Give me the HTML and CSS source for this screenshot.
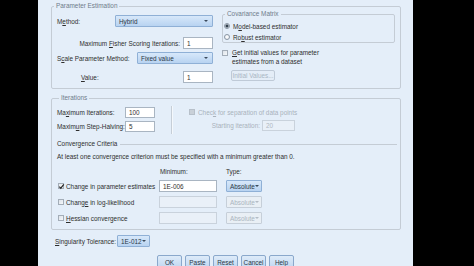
FILE: index.html
```html
<!DOCTYPE html>
<html>
<head>
<meta charset="utf-8">
<link rel="stylesheet" href="styles.css">
</head>
<body>
<div class="screen">
  <div class="side-l"></div>
  <div class="dialog">
    <fieldset class="group g-param">
      <legend>Parameter Estimation</legend>
      <div class="param-cols">
        <div class="param-left">
          <div class="row r-method">
            <span class="lbl w-method">M<u>e</u>thod:</span>
            <div class="combo c-method"><span>Hybrid</span><i class="arrow"></i></div>
          </div>
          <div class="row r-fisher end">
            <span class="lbl">Maximum <u>F</u>isher Scoring Iterations:</span>
            <div class="input i-small">1</div>
          </div>
          <div class="row r-scale between">
            <span class="lbl">S<u>c</u>ale Parameter Method:</span>
            <div class="combo c-scale"><span>Fixed value</span><i class="arrow"></i></div>
          </div>
          <div class="row r-value between">
            <span class="lbl ind-value"><u>V</u>alue:</span>
            <div class="input i-small">1</div>
          </div>
        </div>
        <div class="param-right">
          <fieldset class="group g-cov">
            <legend>Covariance Matrix</legend>
            <div class="radio-row rr-1"><span class="radio on"></span><span>M<u>o</u>del-based estimator</span></div>
            <div class="radio-row rr-2"><span class="radio"></span><span>Ro<u>b</u>ust estimator</span></div>
          </fieldset>
          <div class="init-row">
            <span class="check"></span>
            <span class="init-text"><u>G</u>et initial values for parameter<br>estimates from a dataset</span>
          </div>
          <div class="btn disabled b-init">Initial Values...</div>
        </div>
      </div>
    </fieldset>

    <fieldset class="group g-iter">
      <legend>Iterations</legend>
      <div class="iter-top">
        <div class="iter-left">
          <div class="row r-maxit">
            <span class="lbl w-maxit">Ma<u>x</u>imum Iterations:</span>
            <div class="input i-small i-h11">100</div>
          </div>
          <div class="row r-step">
            <span class="lbl w-maxit">Maxim<u>u</u>m Step-Halving:</span>
            <div class="input i-small i-h11">5</div>
          </div>
        </div>
        <div class="vsep"></div>
        <div class="iter-right">
          <div class="sep-row"><span class="check disabled-check"></span><span class="dis-text">Chec<u>k</u> for separation of data points</span></div>
          <div class="row r-start end">
            <span class="dis-text">Starting iteration:</span>
            <div class="input disabled-input i-start">20</div>
          </div>
        </div>
      </div>
      <div class="conv-head"><span>Convergence Criteria</span><span class="hline"></span></div>
      <div class="conv-note">At least one convergence criterion must be specified with a minimum greater than 0.</div>
      <div class="crit-grid">
        <span></span><span class="col-min">Minimum:</span><span class="col-type">Type:</span>

        <div class="crit-lbl"><span class="check checked"><svg viewBox="0 0 7 7" width="7" height="7"><path d="M1.3 3.6 L2.8 5.2 L5.8 1.3" fill="none" stroke="#2a2a2a" stroke-width="1.2"/></svg></span><span>Chan<u>g</u>e in parameter estimates</span></div>
        <div class="input i-crit">1E-006</div>
        <div class="combo c-type"><span>Absolute</span><i class="arrow"></i></div>

        <div class="crit-lbl"><span class="check"></span><span>Chang<u>e</u> in log-likelihood</span></div>
        <div class="input disabled-input i-crit"></div>
        <div class="combo disabled-combo c-type"><span>Absolute</span><i class="arrow"></i></div>

        <div class="crit-lbl"><span class="check"></span><span><u>H</u>essian convergence</span></div>
        <div class="input disabled-input i-crit"></div>
        <div class="combo disabled-combo c-type"><span>Absolute</span><i class="arrow"></i></div>
      </div>
    </fieldset>

    <div class="row r-sing">
      <span class="lbl w-sing"><u>S</u>ingularity Tolerance:</span>
      <div class="combo c-sing"><span>1E-012</span><i class="arrow"></i></div>
    </div>

    <div class="buttons">
      <div class="btn">OK</div>
      <div class="btn"><u>P</u>aste</div>
      <div class="btn"><u>R</u>eset</div>
      <div class="btn">Cancel</div>
      <div class="btn">Help</div>
    </div>
  </div>
  <div class="side-r"></div>
</div>
</body>
</html>
```

FILE: styles.css
```css
* { box-sizing: border-box; }
html, body { margin: 0; padding: 0; }
body {
  background: #000;
  width: 474px;
  height: 266px;
  overflow: hidden;
  font-family: "Liberation Sans", Arial, sans-serif;
  font-size: 6.4px;
  color: #2e2e2e;
}
u { text-decoration: underline; text-underline-offset: 1px; }

.screen { display: flex; height: 266px; }
.side-l { width: 38px; flex: none; background: #000; }
.side-r { flex: 1; background: #000; }

.dialog {
  width: 375px;
  flex: none;
  height: 266px;
  background: #e4eef9;
  padding: 2px 12px 0 13px;
  display: flex;
  flex-direction: column;
  overflow: hidden;
}
.dialog > * { flex: none; }

fieldset.group {
  margin: 0;
  padding: 0;
  border: 1px solid #c4ccd5;
  border-radius: 2px;
  min-width: 0;
}
legend {
  padding: 0 2px;
  margin-left: 2px;
  line-height: 8px;
  height: 8px;
  color: #6f7c8a;
}

.row { display: flex; align-items: center; height: 12px; }
.row.end { justify-content: flex-end; }
.row.between { justify-content: space-between; }
.lbl { white-space: nowrap; }

/* Parameter Estimation */
fieldset.g-param { height: 87px; }
.param-cols { display: flex; padding-left: 5px; }
.param-left { width: 156px; flex: none; }
.r-method { margin-top: 5px; }
.w-method { width: 58px; }
.c-method { width: 98px; }
.r-fisher { margin-top: 10px; }
.r-fisher .input { margin-left: 3px; }
.r-scale { margin-top: 3px; }
.c-scale { width: 76px; }
.r-value { margin-top: 7px; }
.ind-value { padding-left: 24px; }

.param-right { width: 173px; margin-left: 9px; flex: none; }
fieldset.g-cov { height: 33px; }
.radio-row { display: flex; align-items: center; height: 8px; padding-left: 1px; }
.rr-1 { margin-top: 4px; }
.rr-2 { margin-top: 3px; }
.radio {
  width: 6px; height: 6px; border-radius: 50%;
  border: 1px solid #8a96a3;
  background: radial-gradient(circle, #ffffff 0, #e6ebf0 100%);
  margin-right: 3px;
  flex: none;
}
.radio.on { background: radial-gradient(circle, #33404d 0, #33404d 1.3px, #dde4ec 1.8px); }

.init-row { display: flex; align-items: flex-start; margin-top: 5px; }
.init-row .check { margin-top: 2px; margin-right: 4px; }
.init-text { line-height: 9px; }
.b-init { width: 44px; height: 11px; margin-left: 9px; margin-top: 4px; }

/* widgets */
.combo {
  display: flex; align-items: center;
  height: 12px;
  border: 1px solid #8fb0d6;
  border-radius: 1px;
  background: linear-gradient(#d7e8fa, #b8d3f1);
  padding-left: 3px;
  color: #2a3744;
}
.arrow {
  margin-left: auto;
  margin-right: 4px;
  width: 0; height: 0;
  border-left: 2px solid transparent;
  border-right: 2px solid transparent;
  border-top: 2px solid #3a4a5c;
}
.disabled-combo {
  background: #e9eff5;
  border-color: #c6cfd9;
  color: #aab4be;
}
.disabled-combo .arrow { border-top-color: #b4bcc6; }

.input {
  display: flex; align-items: center;
  height: 12px;
  border: 1px solid #a9b5c2;
  background: #fff;
  padding-left: 3px;
  color: #2e2e2e;
}
.i-small { width: 30px; }
.i-h11 { height: 11px; }
.disabled-input { background: #e9f0f8; border-color: #c9d2dc; color: #b0b8c2; }

.check {
  width: 6px; height: 6px;
  border: 1px solid #a3adb8;
  background: linear-gradient(135deg, #dde3ea, #f6f8fa);
  flex: none;
  display: flex; align-items: center; justify-content: center;
}
.check svg { flex: none; margin: -1px; }
.disabled-check { background: #c9d0d8; border-color: #b7c0ca; }

.btn {
  display: flex; align-items: center; justify-content: center;
  border: 1px solid #8aa8cc;
  border-radius: 2px;
  background: linear-gradient(#deebf9, #c0d7f1);
  color: #2a3744;
}
.btn.disabled { background: #e4edf7; border-color: #bfcad7; color: #a9b6c3; }

/* Iterations */
fieldset.g-iter { height: 136px; margin-top: 5px; padding: 0 3px 0 5px; }
.iter-top { display: flex; }
.iter-left { width: 98px; flex: none; }
.r-maxit { margin-top: 5px; height: 11px; }
.r-step { margin-top: 3px; height: 11px; }
.w-maxit { width: 68px; }
.vsep { width: 1px; height: 28px; margin: 4px 0 0 16px; background: #c6ced7; box-shadow: 1px 0 0 #f4f8fc; }
.iter-right { width: 106px; margin-left: 17px; }
.sep-row { display: flex; align-items: center; height: 8px; margin-top: 6px; }
.sep-row .check { margin-right: 3px; }
.dis-text { color: #a9b2bc; white-space: nowrap; }
.r-start { margin-top: 4px; height: 11px; }
.i-start { width: 33px; height: 11px; margin-left: 2px; }

.conv-head { display: flex; align-items: center; height: 8px; margin-top: 5px; }
.hline { flex: 1; height: 1px; background: #c4ccd5; margin-left: 3px; margin-top: 3px; }
.conv-note { height: 8px; line-height: 8px; margin-top: 6px; }

.crit-grid {
  display: grid;
  grid-template-columns: 102px 67px 36px;
  grid-template-rows: 8px 12px 12px 12px;
  row-gap: 4px;
  margin-top: 7px;
  align-items: center;
}
.crit-grid > span { line-height: 8px; }
.col-min { padding-left: 1px; }
.crit-lbl { display: flex; align-items: center; padding-left: 1px; }
.crit-lbl .check { margin-right: 2px; }
.checked { background: linear-gradient(135deg, #e4e9ee, #ffffff); }
.i-crit { width: 58px; }
.c-type { width: 36px; }
.c-type .arrow { margin-right: 3px; }

/* Singularity + buttons */
.r-sing { margin-top: 5px; padding-left: 4px; }
.w-sing { width: 62px; }
.c-sing { width: 33px; }
.c-sing .arrow { margin-right: 3px; }

.buttons { display: flex; gap: 3px; margin-top: 8px; padding-left: 106px; }
.buttons .btn { width: 25px; height: 14px; flex: none; }
```
